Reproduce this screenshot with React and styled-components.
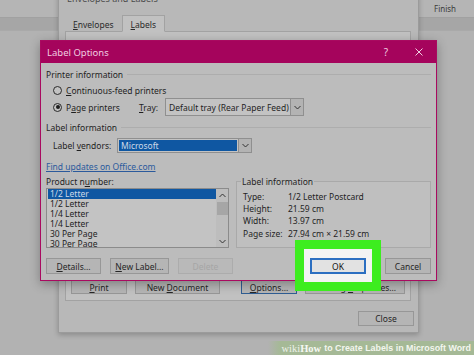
import React from 'react';
import styled, { createGlobalStyle } from 'styled-components';

const Global = createGlobalStyle`
  html, body { margin: 0; padding: 0; background: #b2b2b2; }
  #root { width: 474px; height: 355px; }
`;

const Stage = styled.div`
  position: relative;
  width: 474px;
  height: 355px;
  overflow: hidden;
  background: #b2b2b2;
  font-family: "Noto Sans", "Open Sans", sans-serif;
  font-size: 8px;
  color: #1f1f1f;
  white-space: nowrap;
`;

/* ---------- Word ribbon behind ---------- */
const Ribbon = styled.div`
  display: flex;
  flex-direction: column;
`;
const RibbonTop = styled.div`
  height: 17px;
  display: flex;
  justify-content: flex-end;
  align-items: center;
  padding-right: 18px;
  background: #b5b5b5;
  color: #3c3c3c;
`;
const RibbonBand = styled.div`
  height: 12px;
  background: #a6a6a6;
  border-top: 1px solid #a1a1a1;
  border-bottom: 1px solid #a9a9a9;
`;

/* ---------- Envelopes and Labels window ---------- */
const EnvWindow = styled.section`
  position: absolute;
  left: 58px;
  top: -10px;
  width: 361px;
  height: 343px;
  box-sizing: border-box;
  background: #b8b8b8;
  border: 1px solid #9b9b9b;
  box-shadow: 0 2px 5px rgba(0, 0, 0, 0.22);
  display: flex;
  flex-direction: column;
`;
const EnvTitle = styled.div`
  height: 14px;
  padding-left: 8px;
  display: flex;
  align-items: center;
  font-size: 9px;
  color: #4a4a4a;
`;
const TabStrip = styled.div`
  display: flex;
  padding: 10px 0 0 6px;
  position: relative;
  z-index: 1;
`;
const Tab = styled.div`
  height: 17px;
  padding: 0 ${p => (p.$active ? 8 : 7)}px 0;
  display: flex;
  align-items: flex-end;
  font-size: 8.5px;
  line-height: 12px;
  color: #2a2a2a;
  box-sizing: border-box;
  border: 1px solid ${p => (p.$active ? '#a2a2a2' : 'transparent')};
  border-bottom: 1px solid ${p => (p.$active ? '#c1c1c1' : 'transparent')};
  background: ${p => (p.$active ? '#c1c1c1' : 'transparent')};
  margin-bottom: -1px;
`;
const EnvPanel = styled.div`
  margin: 0 7px 0 6px;
  height: 270px;
  box-sizing: border-box;
  background: #c1c1c1;
  border: 1px solid #a2a2a2;
  display: flex;
  flex-direction: column;
  justify-content: flex-end;
  padding: 0 5px 6px 5px;
`;
const EnvButtons = styled.div`
  display: flex;
  gap: 8px;
`;
const EnvFooter = styled.div`
  display: flex;
  justify-content: flex-end;
  padding: 10px 4px 0 0;
`;

/* ---------- shared controls ---------- */
const Button = styled.div`
  width: ${p => p.$w}px;
  height: ${p => p.$h || 16}px;
  box-sizing: border-box;
  display: flex;
  align-items: center;
  justify-content: center;
  font-size: 8.5px;
  background: ${p => (p.$disabled ? '#b9b9b9' : '#b5b5b5')};
  color: ${p => (p.$disabled ? '#a6a6a6' : '#262626')};
  border: 1px solid ${p => (p.$focus ? '#2f5d93' : p.$disabled ? '#acacac' : '#979797')};
  margin-left: ${p => p.$ml || 0}px;
`;
const U = styled.span`
  text-decoration: underline;
  text-underline-offset: 1px;
`;

/* ---------- Label Options dialog ---------- */
const Dialog = styled.section`
  position: absolute;
  left: 40px;
  top: 40px;
  width: 397px;
  height: 241px;
  box-sizing: border-box;
  border: 1px solid #a90a60;
  background: #bcbcbc;
  box-shadow: 0 3px 10px rgba(0, 0, 0, 0.3);
  display: flex;
  flex-direction: column;
`;
const DlgTitle = styled.header`
  height: 22px;
  flex: none;
  background: #a5045c;
  display: flex;
  align-items: center;
  padding-left: 6px;
  color: #f0cde0;
  font-size: 9.5px;
`;
const TitleText = styled.span`
  flex: 1;
`;
const TitleHelp = styled.span`
  width: 10px;
  text-align: center;
  font-size: 10px;
  margin-right: 22px;
`;
const TitleClose = styled.span`
  width: 12px;
  display: flex;
  justify-content: center;
  margin-right: 11px;
`;
const DlgBody = styled.div`
  flex: 1;
  display: flex;
  flex-direction: column;
  padding: 0 5px;
`;
const GroupHead = styled.div`
  height: 12px;
  margin-top: ${p => p.$mt}px;
  display: flex;
  align-items: center;
  gap: 4px;
  font-size: 8.5px;
  &::after {
    content: '';
    flex: 1;
    height: 1px;
    background: #adadad;
  }
`;
const Row = styled.div`
  height: ${p => p.$h}px;
  margin-top: ${p => p.$mt}px;
  padding-left: ${p => p.$pl || 0}px;
  display: flex;
  align-items: center;
`;
const RadioOpt = styled.label`
  display: flex;
  align-items: center;
  gap: 4px;
  width: ${p => p.$w || 'auto'};
  font-size: 8.5px;
`;
const RadioDot = styled.span`
  width: 9px;
  height: 9px;
  box-sizing: border-box;
  border-radius: 50%;
  border: 1px solid #2a2a2a;
  background: #c2c2c2;
  display: flex;
  align-items: center;
  justify-content: center;
  &::after {
    content: '';
    width: 4px;
    height: 4px;
    border-radius: 50%;
    background: ${p => (p.$on ? '#1e1e1e' : 'transparent')};
  }
`;
const FieldLabel = styled.span`
  width: ${p => p.$w}px;
  font-size: 8.5px;
`;
const Select = styled.div`
  display: flex;
  height: ${p => p.$h}px;
  width: ${p => p.$w}px;
  box-sizing: border-box;
  border: 1px solid #8f8f8f;
  background: #c3c3c3;
`;
const SelectValue = styled.div`
  flex: 1;
  display: flex;
  align-items: center;
  padding-left: 2px;
  margin: 1px;
  font-size: 8.5px;
  overflow: hidden;
  background: ${p => (p.$hl ? '#0f57a2' : 'transparent')};
  color: ${p => (p.$hl ? '#cdd9e8' : '#1f1f1f')};
`;
const SelectArrow = styled.div`
  width: 12px;
  border-left: 1px solid #8f8f8f;
  background: #b3b3b3;
  display: flex;
  align-items: center;
  justify-content: center;
`;
const Link = styled.div`
  height: 12px;
  margin-top: 7px;
  display: flex;
  align-items: center;
  color: #2b5a9c;
  text-decoration: underline;
  font-size: 8.5px;
`;
const Split = styled.div`
  display: grid;
  grid-template-columns: 183px 1fr;
  column-gap: 7px;
  margin-top: 3px;
  height: 73px;
`;
const LeftCol = styled.div`
  display: flex;
  flex-direction: column;
`;
const SmallLabel = styled.div`
  height: 12px;
  display: flex;
  align-items: center;
  font-size: 8.5px;
`;
const ListBox = styled.div`
  margin-top: 1px;
  height: 60px;
  box-sizing: border-box;
  border: 1px solid #8b8b8b;
  background: #c3c3c3;
  display: flex;
  overflow: hidden;
`;
const ListItems = styled.div`
  flex: 1;
  padding: 0 0 0 1px;
`;
const ListItem = styled.div`
  height: 10px;
  line-height: 10px;
  padding-left: 2px;
  font-size: 8.5px;
  background: ${p => (p.$sel ? '#0f57a2' : 'transparent')};
  color: ${p => (p.$sel ? '#cdd9e8' : '#1f1f1f')};
`;
const ScrollBar = styled.div`
  width: 12px;
  display: flex;
  flex-direction: column;
  align-items: center;
  background: #bdbdbd;
`;
const ScrollBtn = styled.div`
  height: 12px;
  display: flex;
  align-items: center;
  justify-content: center;
`;
const ScrollTrack = styled.div`
  flex: 1;
  width: 100%;
`;
const ScrollThumb = styled.div`
  width: 11px;
  height: 13px;
  margin: 1px auto 0;
  background: #a6a6a6;
`;
const InfoBox = styled.fieldset`
  margin: 0;
  margin-top: 1px;
  padding: 3px 6px 0 6px;
  border: 1px solid #a9a9a9;
  background: #bfbfbf;
  min-width: 0;
`;
const InfoLegend = styled.legend`
  padding: 0 1px;
  margin-left: -2px;
  font-size: 8.5px;
`;
const InfoGrid = styled.div`
  display: grid;
  grid-template-columns: 45px 1fr;
  grid-auto-rows: 12.3px;
  align-items: center;
  font-size: 8.5px;
`;
const ButtonRow = styled.div`
  margin-top: 10px;
  display: flex;
  align-items: center;
  gap: 9px;
`;
const Spacer = styled.div`
  flex: 1;
`;
const Spotlight = styled.div`
  margin: -9px -6px -8px -6px;
  padding: 9px 6px 8px 6px;
  background: #f3f3f3;
  box-shadow: 0 0 0 9px #3ded1f;
  position: relative;
  z-index: 2;
`;
const OkButton = styled.div`
  width: 56px;
  height: 16px;
  box-sizing: border-box;
  display: flex;
  align-items: center;
  justify-content: center;
  font-size: 8.5px;
  background: #e2e2e2;
  color: #111;
  border: 2px solid #2c6fc1;
`;

/* ---------- watermark ---------- */
const Watermark = styled.div`
  position: absolute;
  right: 0;
  bottom: 0;
  height: 14px;
  padding: 0 3px 0 14px;
  display: flex;
  align-items: center;
  background: linear-gradient(90deg, rgba(164, 184, 148, 0) 0, #a5b996 12px);
  color: #f3f6ee;
  font-family: "Liberation Sans", Arial, sans-serif;
  font-weight: bold;
  font-size: 8.9px;
  z-index: 3;
`;
const WikiMark = styled.span`
  font-family: "Liberation Serif", serif;
  font-weight: ${p => (p.$bold ? 'bold' : 'normal')};
  font-size: 10.5px;
  color: ${p => (p.$bold ? '#f6f8f2' : '#eef2ea')};
  margin-right: ${p => (p.$bold ? '3px' : '0')};
`;

const Chevron = ({ up, color = '#333' }) => (
  <svg width="7" height="5" viewBox="0 0 7 5">
    <polyline
      points={up ? '0.5,4 3.5,1 6.5,4' : '0.5,1 3.5,4 6.5,1'}
      fill="none"
      stroke={color}
      strokeWidth="1"
    />
  </svg>
);

const CloseX = () => (
  <svg width="8" height="8" viewBox="0 0 8 8">
    <path d="M0.5 0.5 L7.5 7.5 M7.5 0.5 L0.5 7.5" stroke="#f0cde0" strokeWidth="1" />
  </svg>
);

const products = ['1/2 Letter', '1/2 Letter', '1/4 Letter', '1/4 Letter', '30 Per Page', '30 Per Page'];
const info = [
  ['Type:', '1/2 Letter Postcard'],
  ['Height:', '21.59 cm'],
  ['Width:', '13.97 cm'],
  ['Page size:', '27.94 cm × 21.59 cm'],
];

export default function App() {
  return (
    <Stage>
      <Global />
      <Ribbon>
        <RibbonTop>Finish</RibbonTop>
        <RibbonBand />
      </Ribbon>

      <EnvWindow>
        <EnvTitle>Envelopes and Labels</EnvTitle>
        <TabStrip>
          <Tab><span><U>E</U>nvelopes</span></Tab>
          <Tab $active><span><U>L</U>abels</span></Tab>
        </TabStrip>
        <EnvPanel>
          <EnvButtons>
            <Button $w={56} $h={14}><span><U>P</U>rint</span></Button>
            <Button $w={85} $h={14}><span>New <U>D</U>ocument</span></Button>
            <Button $w={56} $h={14} $ml={13} $focus><span><U>O</U>ptions...</span></Button>
            <Button $w={100} $h={14}><span>Printing <U>P</U>roperties...</span></Button>
          </EnvButtons>
        </EnvPanel>
        <EnvFooter>
          <Button $w={56} $h={15}>Close</Button>
        </EnvFooter>
      </EnvWindow>

      <Dialog>
        <DlgTitle>
          <TitleText>Label Options</TitleText>
          <TitleHelp>?</TitleHelp>
          <TitleClose><CloseX /></TitleClose>
        </DlgTitle>
        <DlgBody>
          <GroupHead $mt={5}>Printer information</GroupHead>
          <Row $h={12} $mt={4} $pl={7}>
            <RadioOpt><RadioDot /><span><U>C</U>ontinuous-feed printers</span></RadioOpt>
          </Row>
          <Row $h={18} $mt={2} $pl={7}>
            <RadioOpt $w="86px"><RadioDot $on /><span>P<U>a</U>ge printers</span></RadioOpt>
            <FieldLabel $w={26}><U>T</U>ray:</FieldLabel>
            <Select $h={18} $w={139}>
              <SelectValue>Default tray (Rear Paper Feed)</SelectValue>
              <SelectArrow><Chevron /></SelectArrow>
            </Select>
          </Row>
          <GroupHead $mt={5}>Label information</GroupHead>
          <Row $h={15} $mt={5} $pl={7}>
            <FieldLabel $w={64}>Label <U>v</U>endors:</FieldLabel>
            <Select $h={15} $w={135}>
              <SelectValue $hl>Microsoft</SelectValue>
              <SelectArrow><Chevron /></SelectArrow>
            </Select>
          </Row>
          <Link>Find updates on Office.com</Link>
          <Split>
            <LeftCol>
              <SmallLabel><span>Product n<U>u</U>mber:</span></SmallLabel>
              <ListBox>
                <ListItems>
                  {products.map((p, i) => (
                    <ListItem key={i} $sel={i === 0}>{p}</ListItem>
                  ))}
                </ListItems>
                <ScrollBar>
                  <ScrollBtn><Chevron up /></ScrollBtn>
                  <ScrollTrack><ScrollThumb /></ScrollTrack>
                  <ScrollBtn><Chevron /></ScrollBtn>
                </ScrollBar>
              </ListBox>
            </LeftCol>
            <InfoBox>
              <InfoLegend>Label information</InfoLegend>
              <InfoGrid>
                {info.map(([k, v]) => (
                  <React.Fragment key={k}>
                    <span>{k}</span>
                    <span>{v}</span>
                  </React.Fragment>
                ))}
              </InfoGrid>
            </InfoBox>
          </Split>
          <ButtonRow>
            <Button $w={55}><span><U>D</U>etails...</span></Button>
            <Button $w={59}><span><U>N</U>ew Label...</span></Button>
            <Button $w={55} $disabled>Delete</Button>
            <Spacer />
            <Spotlight><OkButton>OK</OkButton></Spotlight>
            <Button $w={46} $ml={10}>Cancel</Button>
          </ButtonRow>
        </DlgBody>
      </Dialog>

      <Watermark>
        <WikiMark>wiki</WikiMark>
        <WikiMark $bold>How</WikiMark>
        <span>to Create Labels in Microsoft Word</span>
      </Watermark>
    </Stage>
  );
}
